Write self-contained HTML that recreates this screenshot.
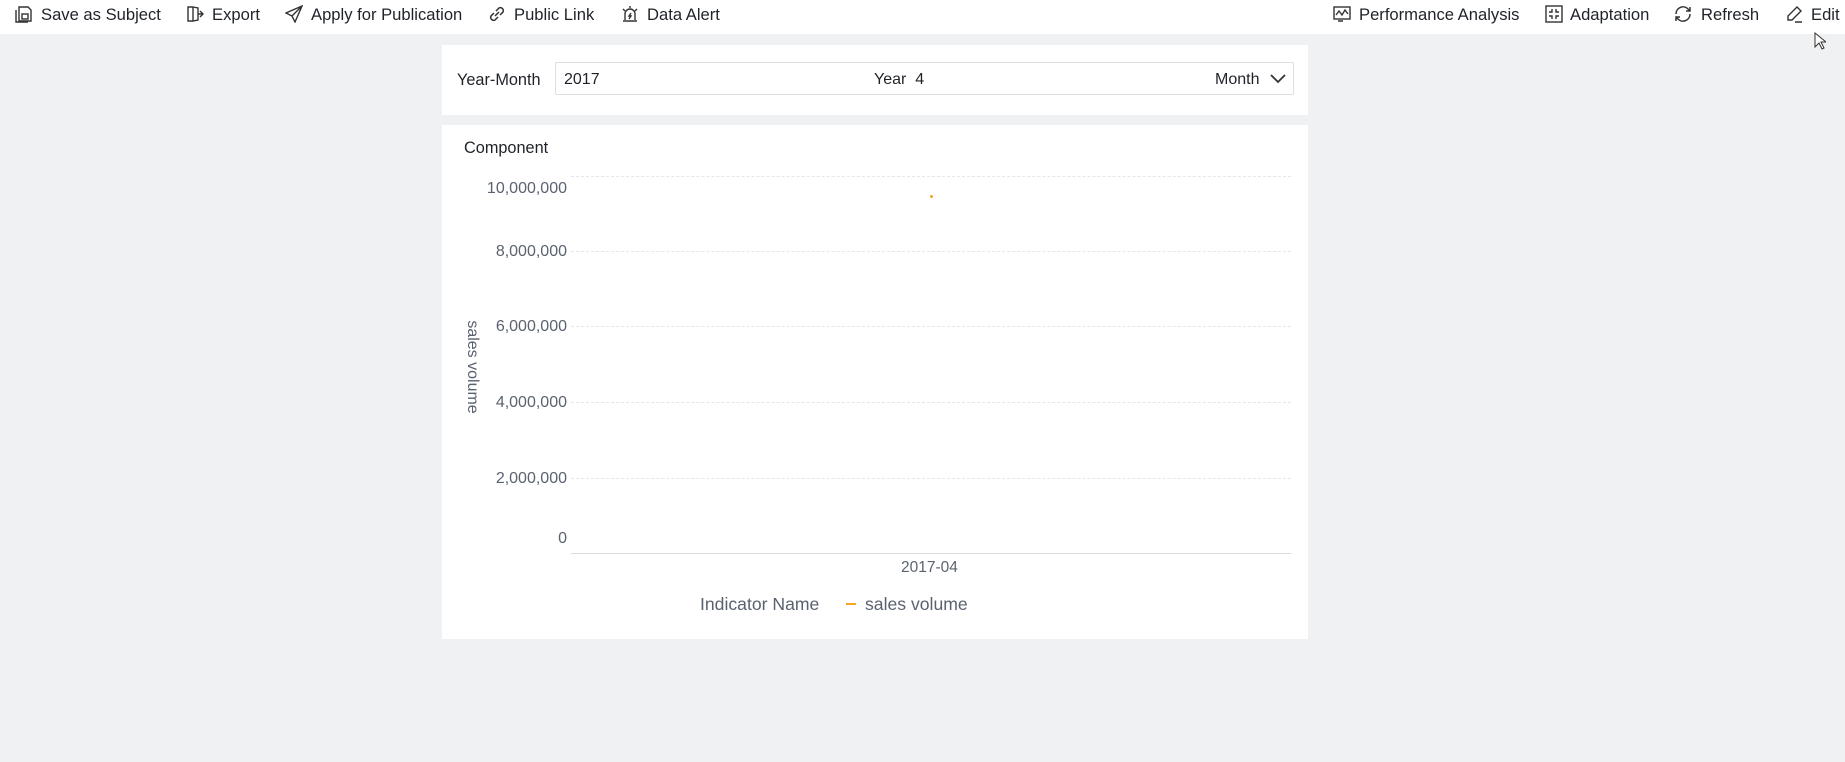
<!DOCTYPE html>
<html><head><meta charset="utf-8"><style>
*{margin:0;padding:0;box-sizing:border-box}
body{width:1845px;height:762px;background:#f0f1f3;font-family:"Liberation Sans",Arial,sans-serif;position:relative;overflow:hidden;color:#1f2329}
.tb{position:absolute;left:0;top:0;width:1845px;height:34px;background:#fff}
.t{position:absolute;top:5px;font-size:16.6px;line-height:20px;color:#1f2329;white-space:nowrap}
.i{position:absolute;top:5px;width:18px;height:18px}
.p{position:absolute;background:#fff}
.a{position:absolute;font-size:16px;color:#5a6270;white-space:nowrap}
.g{position:absolute;left:571px;width:720px;border-top:1px dashed #e4e6ea}
</style></head><body>
<div class="tb">
<svg class="i" style="left:15px" viewBox="0 0 18 18" fill="none" stroke="#333" stroke-width="1.4"><path d="M4 2h9l3 3v11H4z"/><path d="M1 5v12h12"/><rect x="7" y="9" width="6" height="5"/></svg>
<div class="t" style="left:41px">Save as Subject</div>
<svg class="i" style="left:186px" viewBox="0 0 18 18" fill="none" stroke="#333" stroke-width="1.4"><path d="M7 2H2v14h5M7 2l5 1v12l-5 1zM12 9h5M14 6l3 3-3 3"/></svg>
<div class="t" style="left:212px">Export</div>
<svg class="i" style="left:285px" viewBox="0 0 18 18" fill="none" stroke="#333" stroke-width="1.4"><path d="M17 1L1 8l6 3 3 6zM7 11l10-10"/></svg>
<div class="t" style="left:311px">Apply for Publication</div>
<svg class="i" style="left:488px" viewBox="0 0 18 18" fill="none" stroke="#333" stroke-width="1.5"><path d="M8 6l3-3a3 3 0 0 1 4 4l-3 3M10 12l-3 3a3 3 0 0 1-4-4l3-3M7 11l4-4"/></svg>
<div class="t" style="left:514px">Public Link</div>
<svg class="i" style="left:621px" viewBox="0 0 18 18" fill="none" stroke="#333" stroke-width="1.4"><path d="M4 15V9a5 5 0 0 1 10 0v6M2 16h14M9 1v2M2 4l2 2M16 4l-2 2M10 8l-2 3h2l-2 3"/></svg>
<div class="t" style="left:647px">Data Alert</div>
<svg class="i" style="left:1333px" viewBox="0 0 18 18" fill="none" stroke="#333" stroke-width="1.4"><rect x="1" y="2" width="16" height="12"/><path d="M3 10l3-4 3 4 3-5 3 4M5 16h5"/></svg>
<div class="t" style="left:1359px">Performance Analysis</div>
<svg class="i" style="left:1545px" viewBox="0 0 18 18" fill="none" stroke="#333" stroke-width="1.4"><rect x="1" y="1" width="16" height="16"/><path d="M7 4v3H4M11 4v3h3M7 14v-3H4M11 14v-3h3"/></svg>
<div class="t" style="left:1570px">Adaptation</div>
<svg class="i" style="left:1674px" viewBox="0 0 18 18" fill="none" stroke="#333" stroke-width="1.5"><path d="M2 9a7 7 0 0 1 12-5l2 2M16 9a7 7 0 0 1-12 5l-2-2M16 2v4h-4M2 16v-4h4"/></svg>
<div class="t" style="left:1701px">Refresh</div>
<svg class="i" style="left:1785px" viewBox="0 0 18 18" fill="none" stroke="#333" stroke-width="1.4"><path d="M12 2l4 4-9 9H3v-4zM10 17h7"/></svg>
<div class="t" style="left:1811px">Edit</div>
</div>
<svg style="position:absolute;left:1814px;top:32px" width="12" height="18" viewBox="0 0 12 18"><path d="M1 1v14l4-4 3 6 2-1-3-6h5z" fill="#fff" stroke="#333"/></svg>

<div class="p" style="left:442px;top:45px;width:866px;height:70px"></div>
<div style="position:absolute;left:457px;top:71px;font-size:16.3px">Year-Month</div>
<div style="position:absolute;left:555px;top:62px;width:739px;height:33px;border:1px solid #dcdfe4;border-radius:2px;background:#fff"></div>
<div style="position:absolute;left:564px;top:71px;font-size:16px">2017</div>
<div style="position:absolute;left:874px;top:71px;font-size:16px">Year&nbsp; 4</div>
<div style="position:absolute;left:1215px;top:71px;font-size:16px">Month</div>
<svg style="position:absolute;left:1270px;top:74px" width="16" height="10" viewBox="0 0 16 10" fill="none" stroke="#333" stroke-width="1.8"><path d="M1 1l7 7 7-7"/></svg>

<div class="p" style="left:442px;top:125px;width:866px;height:514px"></div>
<div style="position:absolute;left:464px;top:139px;font-size:16.3px">Component</div>
<div class="g" style="top:176px"></div>
<div class="g" style="top:251px"></div>
<div class="g" style="top:326px"></div>
<div class="g" style="top:402px"></div>
<div class="g" style="top:478px"></div>
<div style="position:absolute;left:571px;top:553px;width:720px;border-top:1px solid #d8dbe0"></div>
<div class="a" style="right:1278px;top:180px">10,000,000</div>
<div class="a" style="right:1278px;top:243px">8,000,000</div>
<div class="a" style="right:1278px;top:318px">6,000,000</div>
<div class="a" style="right:1278px;top:394px">4,000,000</div>
<div class="a" style="right:1278px;top:470px">2,000,000</div>
<div class="a" style="right:1278px;top:530px">0</div>
<div class="a" style="left:472px;top:367px;transform:translate(-50%,-50%) rotate(90deg)">sales volume</div>
<div style="position:absolute;left:930px;top:195px;width:3px;height:3px;background:#f5a623;border-radius:50%"></div>
<div class="a" style="left:901px;top:559px;font-size:15.5px">2017-04</div>
<div class="a" style="left:700px;top:594px;font-size:17.6px">Indicator Name</div>
<div style="position:absolute;left:846px;top:603px;width:10px;height:2px;background:#f5a623"></div>
<div class="a" style="left:865px;top:594px;font-size:17.6px">sales volume</div>
</body></html>
